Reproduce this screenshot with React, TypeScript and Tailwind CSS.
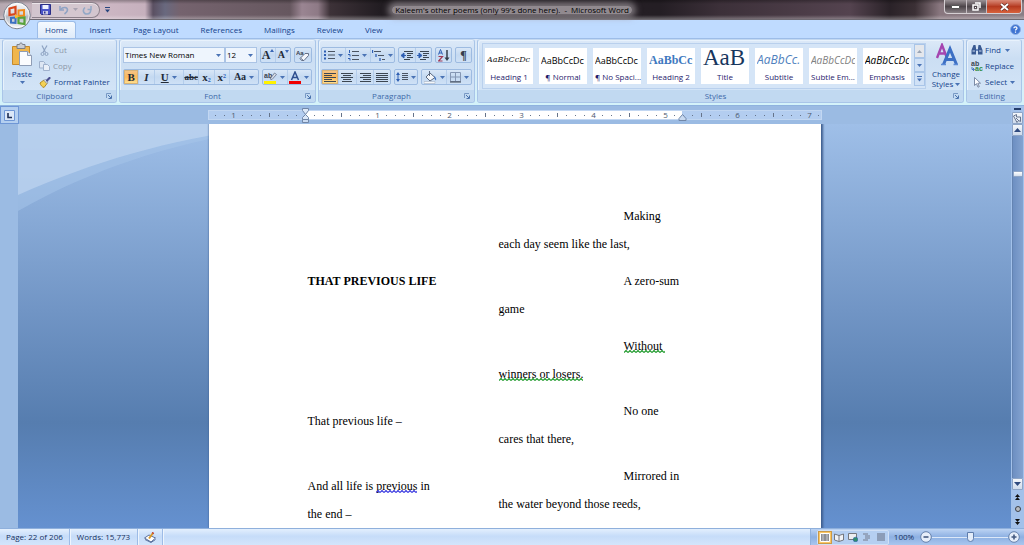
import type { ReactNode } from "react";
import clsx from "clsx";

const TABS = ["Insert", "Page Layout", "References", "Mailings", "Review", "View"];

const STYLES = [
	{ name: "Heading 1", sample: "AaBbCcDc", look: "font-['DejaVu_Serif'] text-[8px] italic text-[#222]" },
	{ name: "¶ Normal", sample: "AaBbCcDc", look: "text-[9px] text-black" },
	{ name: "¶ No Spaci...", sample: "AaBbCcDc", look: "text-[9px] text-black" },
	{ name: "Heading 2", sample: "AaBbCc", look: "font-['Liberation_Serif'] text-[12px] font-bold text-[#4079c0]" },
	{ name: "Title", sample: "AaB", look: "font-['Liberation_Serif'] pb-[6px] text-[23px] text-[#17365d]" },
	{ name: "Subtitle", sample: "AaBbCc.", look: "text-[12px] italic text-[#4f81bd]" },
	{ name: "Subtle Em...", sample: "AaBbCcDc", look: "text-[10px] italic text-[#808080]" },
	{ name: "Emphasis", sample: "AaBbCcDc", look: "text-[10px] italic text-black" },
];

const VERSES = [
	["Making", "each day seem like the last,"],
	["A zero-sum", "game"],
	["Without ", "winners or losers."],
	["No one", "cares that there,"],
	["Mirrored in", "the water beyond those reeds,"],
];

const TICKS = Array.from({ length: 68 }, (_, i) => i - 10);

interface IconProps {
	w?: number;
	h?: number;
	children: ReactNode;
}

function Icon({ w = 12, h = 12, children }: IconProps) {
	return (
		<svg className="shrink-0" width={w} height={h} viewBox={`0 0 ${w} ${h}`} fill="none" aria-hidden="true">
			{children}
		</svg>
	);
}

function Caret({ color = "#4a73b5" }: { color?: string }) {
	return (
		<Icon w={5} h={3}>
			<path d="M0 0h5L2.500 3z" fill={color} />
		</Icon>
	);
}

interface GroupProps {
	title: string;
	className?: string;
	launcher?: boolean;
	children: ReactNode;
}

function Group({ title, className, launcher = true, children }: GroupProps) {
	return (
		<section
			className={clsx(
				"flex flex-col overflow-hidden rounded-[3px] border border-[#a9c5e8] border-t-[#c3d8f0] bg-linear-to-b from-[#dce9f8] via-[#cbdef3] via-30% to-[#d5e6f8] shadow-[inset_1px_1px_0_#e8f2fc]",
				className,
			)}
		>
			<div className="min-h-0 flex-1">{children}</div>
			<div className="flex h-3 items-center bg-[#c1d9f1] pr-1 text-[#3e6aaa]">
				<h2 className="flex-1 text-center">{title}</h2>
				{launcher && (
					<button aria-label={`${title} options`}>
						<Icon w={6} h={6}>
							<path d="M.5 5V.5H5" stroke="#7899c4" />
							<path d="M2 2l3 3M5.500 2.500v3h-3" stroke="#4a73ad" />
						</Icon>
					</button>
				)}
			</div>
		</section>
	);
}

function Cluster({ className, children }: { className?: string; children: ReactNode }) {
	return (
		<div
			className={clsx(
				"flex h-4 divide-x divide-[#b4cdeb] rounded-[2px] border border-[#9dbbe1] bg-linear-to-b from-[#d9e7f7] via-[#c4d9f1] via-50% to-[#cfe1f6]",
				className,
			)}
		>
			{children}
		</div>
	);
}

interface ToolProps {
	label: string;
	active?: boolean;
	menu?: boolean;
	className?: string;
	children: ReactNode;
}

function Tool({ label, active, menu, className, children }: ToolProps) {
	return (
		<button
			aria-label={label}
			aria-pressed={active}
			className={clsx(
				"flex flex-1 items-center justify-center gap-[3px] overflow-hidden",
				active && "bg-linear-to-b from-[#f3c58c] via-[#fcb95a] to-[#ffe596] shadow-[inset_0_0_0_1px_#d8b277]",
				className,
			)}
		>
			{children}
			{menu && <Caret />}
		</button>
	);
}

function Lines({ widths }: { widths: number[][] }) {
	return (
		<Icon w={12} h={11}>
			{widths.map(([x, w], i) => (
				<path key={i} d={`M${x} ${i * 2 + 1.5}h${w}`} stroke="#3c4652" />
			))}
		</Icon>
	);
}

function OfficeButton() {
	return (
		<button aria-label="Office Button" className="absolute top-[1px] left-[3px] z-20">
			<Icon w={28} h={29}>
				<defs>
					<linearGradient id="orb" x1="0" y1="0" x2="0" y2="1">
						<stop offset="0" stopColor="#fafafa" />
						<stop offset="0.450" stopColor="#d3d6dc" />
						<stop offset="0.550" stopColor="#b5bac4" />
						<stop offset="1" stopColor="#fbfcfe" />
					</linearGradient>
				</defs>
				<circle cx="14" cy="14.500" r="13.300" fill="url(#orb)" stroke="#7d8390" />
				<circle cx="14" cy="14.500" r="12" stroke="#fff" strokeOpacity=".7" />
				<path d="M6.500 7.500l6-1.500v7l-6 1z" stroke="#d8461b" strokeWidth="2.200" />
				<path d="M15.500 9.500l5.500-.5v5.500l-5.500.5z" stroke="#f08a1c" strokeWidth="2" />
				<path d="M8 17l4.500-.5v5.500l-4.500-.5z" stroke="#3a6fc0" strokeWidth="2" />
				<path d="M15.500 17l6-.5v6.500l-6-1z" stroke="#58a23a" strokeWidth="2.200" />
				<path d="M12 13l4 2.500-4 2z" fill="#f7bd2c" />
			</Icon>
		</button>
	);
}

function TitleBar() {
	return (
		<header className="relative flex h-5 shrink-0 items-center border-b border-[#6e6a72]">
			<div className="absolute inset-0 bg-[linear-gradient(90deg,#b5a8b0_0,#d3bfca_60px,#c6b0bd_145px,#5b5062_153px,#69697f_165px,#75636e_180px,#66575f_290px,#9a8592_302px,#8e7a86_318px,#3d3238_330px,#221d22_380px,#241e24_660px,#3c3039_720px,#54434f_850px,#2a2228_890px,#3b3035_915px,#89777f_940px,#8b7f86_1024px)]" />
			<div className="absolute inset-x-0 top-0 h-1 bg-linear-to-b from-black/30 to-transparent" />
			<div className="absolute inset-x-0 bottom-0 h-1 bg-linear-to-t from-white/30 to-transparent" />
			<OfficeButton />
			<div className="relative ml-8 flex h-4 w-17 items-center gap-1 rounded-r-full border border-l-0 border-[#8b808a] bg-[#d5c9d1]/80 pl-2 shadow-[inset_0_1px_0_#ffffff90]">
				<button aria-label="Save">
					<Icon w={11} h={11}>
						<path d="M.5.500h10v10h-9l-1-1z" fill="#4a55c8" stroke="#2b2f86" />
						<path d="M2.500 1h6v4h-6z" fill="#eef2ff" />
						<path d="M3 7h5v3.500H3z" fill="#c9cde8" />
						<path d="M4 7.500h1.500v2H4z" fill="#2b2f86" />
					</Icon>
				</button>
				<button aria-label="Undo" className="ml-1 flex items-center gap-1">
					<Icon w={10} h={10}>
						<path d="M1 1v4h4" stroke="#8fa3c4" strokeWidth="1.500" />
						<path d="M1.500 4.500C4 1.500 8.500 2 8.500 5c0 2-1.500 3-3 4" stroke="#8fa3c4" strokeWidth="1.600" />
					</Icon>
					<Caret color="#a9a3b0" />
				</button>
				<button aria-label="Redo">
					<Icon w={10} h={10}>
						<path d="M9 1v3.500H5.500" stroke="#93a9c6" strokeWidth="1.500" />
						<path d="M3 2.500C0 5 1.500 9 5 9c3 0 4-2.500 3.500-4.500" stroke="#93a9c6" strokeWidth="1.600" />
					</Icon>
				</button>
			</div>
			<button aria-label="Customize Quick Access Toolbar" className="relative ml-[5px]">
				<Icon w={5} h={6}>
					<path d="M0 .5h5" stroke="#28467e" />
					<path d="M0 2.500h5L2.500 5.500z" fill="#28467e" />
				</Icon>
			</button>
			<h1 className="absolute inset-x-0 mx-auto h-2 w-[240px] rounded-full bg-[#aca5aa]/80 text-center leading-2 whitespace-pre text-black shadow-[0_0_6px_4px_#a19a9fb0]">
				Kaleem's other poems (only 99's done here).  -  Microsoft Word
			</h1>
			<div className="relative mr-[2px] ml-auto flex h-[14px] w-[78px] self-start overflow-hidden rounded-b-[4px] border border-t-0 border-[#d5cfd3] bg-linear-to-b from-[#9b9397] via-[#4d454a] to-[#8a8186]">
				<button aria-label="Minimize" className="flex w-[22px] items-center justify-center border-r border-[#c5bdc2]">
					<Icon w={9} h={4}>
						<path d="M.5.500h8v3h-8z" fill="#fff" stroke="#555" />
					</Icon>
				</button>
				<button aria-label="Restore" className="flex w-[20px] items-center justify-center border-r border-[#c5bdc2]">
					<Icon w={9} h={9}>
						<path d="M3 1h5v5M1 3h5v5H1z" stroke="#fff" strokeWidth="1.500" />
						<path d="M3 5h1v1H3z" fill="#fff" />
					</Icon>
				</button>
				<button
					aria-label="Close"
					className="flex flex-1 items-center justify-center bg-linear-to-b from-[#d98a78] via-[#b53a20] via-50% to-[#d8623c]"
				>
					<Icon w={9} h={8}>
						<path d="M1 1l7 6M8 1L1 7" stroke="#5b2a22" strokeWidth="3" />
						<path d="M1 1l7 6M8 1L1 7" stroke="#fff" strokeWidth="1.800" />
					</Icon>
				</button>
			</div>
		</header>
	);
}

function TabRow() {
	return (
		<nav className="flex h-[18px] shrink-0 items-stretch bg-[#bfdbff] pr-[3px] pl-[37px] text-[#15428b]" aria-label="Ribbon tabs">
			<button className="mt-[1px] rounded-t-[3px] border border-b-0 border-[#9dbde8] bg-linear-to-b from-[#f5faff] to-[#dfebf9] px-[7px]">
				Home
			</button>
			<div className="ml-[5px] flex">
				{TABS.map((tab) => (
					<button key={tab} className="pt-[1px] pr-[13px] pl-[9px]">
						{tab}
					</button>
				))}
			</div>
			<button aria-label="Help" className="ml-auto">
				<Icon w={11} h={11}>
					<circle cx="5.500" cy="5.500" r="5" fill="#3f74d2" stroke="#8fb0e4" />
					<path d="M3.800 4.200C4 2.500 7 2.500 7 4.300c0 1-1.500 1-1.500 2.200M5.500 7.500v1.200" stroke="#fff" strokeWidth="1.200" />
				</Icon>
			</button>
		</nav>
	);
}

function ClipboardGroup() {
	return (
		<Group title="Clipboard" className="w-[115px]">
			<div className="flex gap-1 pt-[2px] pl-[6px]">
				<button className="flex w-[26px] flex-col items-center">
					<Icon w={22} h={24}>
						<path d="M1.500 4.500h17v18h-17z" fill="#f0b64c" stroke="#c58a2d" />
						<path d="M6 2.500h2.500c0-2 3-2 3 0H14v4H6z" fill="#c9ccd2" stroke="#7b7f88" />
						<path d="M8.500 9.500h8l4 4v10h-12z" fill="#fbfcfe" stroke="#8f9db5" />
						<path d="M16.500 9.500v4h4" fill="#dfe5ef" stroke="#8f9db5" />
					</Icon>
					<span className="mt-[2px] leading-[11px]">Paste</span>
					<span className="pt-[2px]">
						<Caret />
					</span>
				</button>
				<div className="flex flex-col items-start text-[#8d98a8]">
					<button className="flex h-4 items-center gap-1">
						<Icon w={11} h={11}>
							<path d="M3 .5l3.500 7M8 .5L4 7.500" stroke="#8ea3c2" strokeWidth="1.200" />
							<circle cx="3.500" cy="9" r="1.500" stroke="#8ea3c2" />
							<circle cx="7.500" cy="9" r="1.500" stroke="#8ea3c2" />
						</Icon>
						Cut
					</button>
					<button className="flex h-4 items-center gap-[3px]">
						<Icon w={11} h={10}>
							<path d="M.5.500h4l1.500 1.500v5H.5z" fill="#dde6f3" stroke="#9fb1cc" />
							<path d="M4.500 3.500h4l2 2v4h-6z" fill="#e9eff8" stroke="#9fb1cc" />
						</Icon>
						Copy
					</button>
					<button className="flex h-4 items-center gap-[3px] text-[#15428b]">
						<Icon w={12} h={11}>
							<path d="M1 6l4-3 3 3.500-3 4C3 10 1.500 8 1 6z" fill="#f3d155" stroke="#b28b27" />
							<path d="M5 3.500l1.500-1.500 2.500 3-1 1.500z" fill="#e7edf6" stroke="#76839b" strokeWidth=".7" />
							<path d="M8 3.500L10.500 1" stroke="#4b4f8f" strokeWidth="2.200" strokeLinecap="round" />
						</Icon>
						Format Painter
					</button>
				</div>
			</div>
		</Group>
	);
}

function FontGroup() {
	const glyph = "font-['Liberation_Serif'] text-[11px] leading-none text-[#222b38]";
	const box = "h-4 w-full appearance-none border border-[#abc4e5] bg-[#eef5fd] pl-[1px] text-black outline-none";
	return (
		<Group title="Font" className="w-[197px]">
			<div className="flex flex-col gap-[6px] px-[3px] pt-[7px]">
				<div className="flex gap-[3px]">
					<div className="flex w-[134px]">
						<label className="relative flex w-[102px] items-center">
							<span className="sr-only">Font</span>
							<select className={box} defaultValue="Times New Roman">
								<option>Times New Roman</option>
							</select>
							<span className="pointer-events-none absolute right-1">
								<Caret />
							</span>
						</label>
						<label className="relative flex w-8 items-center">
							<span className="sr-only">Font size</span>
							<select className={box} defaultValue="12">
								<option>12</option>
							</select>
							<span className="pointer-events-none absolute right-1">
								<Caret />
							</span>
						</label>
					</div>
					<Cluster className="w-8">
						<Tool label="Grow font">
							<span className="flex items-start font-['Liberation_Serif'] text-[12px] leading-none font-bold text-[#222b38]">
								A
								<Icon w={4} h={3}>
									<path d="M0 3h4L2 0z" fill="#3a67b5" />
								</Icon>
							</span>
						</Tool>
						<Tool label="Shrink font">
							<span className="flex items-start font-['Liberation_Serif'] text-[10px] leading-none font-bold text-[#222b38]">
								A
								<Icon w={4} h={3}>
									<path d="M0 0h4L2 3z" fill="#3a67b5" />
								</Icon>
							</span>
						</Tool>
					</Cluster>
					<Cluster className="w-[18px]">
						<Tool label="Clear formatting">
							<Icon w={14} h={13}>
								<text x="0" y="6" fontSize="6" fontWeight="bold" fill="#39424f" fontFamily="Liberation Sans">
									Aa
								</text>
								<path d="M4 9.500l5-5h3.500v2l-4.500 5H5.500z" fill="#f3f6fb" stroke="#66728a" />
								<path d="M4.500 9l3 2.500" stroke="#66728a" />
							</Icon>
						</Tool>
					</Cluster>
				</div>
				<div className="flex gap-[3px]">
					<Cluster className="w-[137px]">
						<Tool label="Bold" active>
							<span className={clsx(glyph, "font-bold")}>B</span>
						</Tool>
						<Tool label="Italic">
							<span className={clsx(glyph, "font-bold italic")}>I</span>
						</Tool>
						<Tool label="Underline" menu className="grow-2">
							<span className={clsx(glyph, "font-bold underline")}>U</span>
						</Tool>
						<Tool label="Strikethrough">
							<span className="font-['Liberation_Serif'] text-[9px] leading-none font-bold text-[#222b38] line-through">
								abc
							</span>
						</Tool>
						<Tool label="Subscript">
							<span className={clsx(glyph, "font-bold")}>
								x<sub className="text-[6px] text-[#2a5cb8]">2</sub>
							</span>
						</Tool>
						<Tool label="Superscript">
							<span className={clsx(glyph, "font-bold")}>
								x<sup className="text-[6px] text-[#2a5cb8]">2</sup>
							</span>
						</Tool>
						<Tool label="Change case" menu className="grow-2">
							<span className="font-['Liberation_Serif'] text-[10px] leading-none font-bold text-[#222b38]">Aa</span>
						</Tool>
					</Cluster>
					<Cluster className="w-[50px]">
						<Tool label="Text highlight color" menu>
							<Icon w={13} h={13}>
								<text x="0" y="7" fontSize="7" fontWeight="bold" fill="#39424f" fontFamily="Liberation Sans">
									ab
								</text>
								<path d="M6 8l4.500-6L12.500 3.500 8 8.500z" fill="#d7dde8" stroke="#66728a" strokeWidth=".8" />
								<path d="M0 10h12v3H0z" fill="#fff200" />
							</Icon>
						</Tool>
						<Tool label="Font color" menu>
							<Icon w={12} h={13}>
								<path d="M2.500 9L6 1l3.500 8M3.500 6.500h5" stroke="#2f4f8f" strokeWidth="1.500" />
								<path d="M0 10h12v3H0z" fill="#f00000" />
							</Icon>
						</Tool>
					</Cluster>
				</div>
			</div>
		</Group>
	);
}

function ParagraphGroup() {
	return (
		<Group title="Paragraph" className="w-[157px]">
			<div className="flex flex-col gap-[6px] px-[2px] pt-[7px]">
				<div className="flex gap-[3px]">
					<Cluster className="w-[74px]">
						<Tool label="Bullets" menu>
							<Icon w={11} h={10}>
								<path d="M0 1.500h2M0 5h2M0 8.500h2" stroke="#2f5fb3" strokeWidth="2" />
								<path d="M4 1.500h7M4 5h7M4 8.500h7" stroke="#4b5563" />
							</Icon>
						</Tool>
						<Tool label="Numbering" menu>
							<Icon w={11} h={11}>
								<path d="M1.500 0v3M0 4.500h2v2M0 8.500h2v2" stroke="#2f5fb3" />
								<path d="M4 1.500h7M4 5.500h7M4 9.500h7" stroke="#4b5563" />
							</Icon>
						</Tool>
						<Tool label="Multilevel list" menu>
							<Icon w={13} h={11}>
								<path d="M.5 0v3M4 4v3M8 8v3" stroke="#2f5fb3" strokeWidth="1.300" />
								<path d="M2 1.500h7M6 5.500h6M10 9.500h3" stroke="#4b5563" />
							</Icon>
						</Tool>
					</Cluster>
					<Cluster className="w-[34px]">
						<Tool label="Decrease indent">
							<Icon w={12} h={11}>
								<path d="M3 1.500h9M6 3.500h6M6 5.500h4M6 7.500h6M3 9.500h6" stroke="#3c4652" />
								<path d="M0 5.500L3 3v5zM3 5.500h2" fill="#2f5fb3" stroke="#2f5fb3" />
							</Icon>
						</Tool>
						<Tool label="Increase indent">
							<Icon w={12} h={11}>
								<path d="M3 1.500h9M6 3.500h6M6 5.500h4M6 7.500h6M3 9.500h6" stroke="#3c4652" />
								<path d="M5 5.500L2 3v5zM0 5.500h2" fill="#2f5fb3" stroke="#2f5fb3" />
							</Icon>
						</Tool>
					</Cluster>
					<Cluster className="w-[17px]">
						<Tool label="Sort">
							<Icon w={12} h={13}>
								<path d="M.5 5.500L2.500.5l2 5M1 4h3" stroke="#2f5fb3" />
								<path d="M.5 7.500h4l-4 4.500h4" stroke="#a03a56" strokeWidth="1.200" />
								<path d="M9 1v9" stroke="#333d4a" strokeWidth="1.500" />
								<path d="M6.500 8.500h5L9 12z" fill="#333d4a" />
							</Icon>
						</Tool>
					</Cluster>
					<Cluster className="w-[17px]">
						<Tool label="Show formatting marks">
							<span className="font-['Liberation_Serif'] text-[12px] leading-none font-bold text-[#333d4a]">¶</span>
						</Tool>
					</Cluster>
				</div>
				<div className="flex gap-[3px]">
					<Cluster className="w-[70px]">
						<Tool label="Align left" active>
							<Lines widths={[[0, 12], [0, 8], [0, 12], [0, 8], [0, 12]]} />
						</Tool>
						<Tool label="Center">
							<Lines widths={[[0, 12], [2, 8], [0, 12], [2, 8], [1, 10]]} />
						</Tool>
						<Tool label="Align right">
							<Lines widths={[[1, 11], [4, 8], [1, 11], [4, 8], [1, 11]]} />
						</Tool>
						<Tool label="Justify">
							<Lines widths={[[0, 12], [0, 12], [0, 12], [0, 12], [0, 12]]} />
						</Tool>
					</Cluster>
					<Cluster className="w-6">
						<Tool label="Line spacing" menu>
							<Icon w={12} h={12}>
								<path d="M0 4L2 1l2 3zM0 8l2 3 2-3z" fill="#2f5fb3" />
								<path d="M2 3v6" stroke="#2f5fb3" />
								<path d="M6 2.500h6M6 4.500h6M6 6.500h6M6 8.500h6" stroke="#4b5563" />
							</Icon>
						</Tool>
					</Cluster>
					<Cluster className="w-[51px]">
						<Tool label="Shading" menu>
							<Icon w={13} h={13}>
								<path d="M2 6l4-4 5 4.500-5 3.500z" fill="#f4f7fb" stroke="#5d6a80" />
								<path d="M5.500 0v5" stroke="#5d6a80" />
								<path d="M10 5c2 1 2.500 3 2 4.500-1-.5-1.500-2-2-4.500z" fill="#3f74c4" />
								<path d="M0 10.500h11v2H0z" fill="#f5f7fa" stroke="#a5b1c4" strokeWidth=".6" />
							</Icon>
						</Tool>
						<Tool label="Borders" menu>
							<Icon w={11} h={11}>
								<path d="M.5.500h10v9H.5zM5.500.5v9M.5 5h10" stroke="#8496b3" />
								<path d="M0 10h11" stroke="#3c4652" />
							</Icon>
						</Tool>
					</Cluster>
				</div>
			</div>
		</Group>
	);
}

function StylesGroup() {
	const step = "flex h-[14px] w-[11px] items-center justify-center border border-[#a9c5e8]";
	return (
		<Group title="Styles" className="min-w-0 flex-1">
			<div className="flex gap-[3px] pt-[3px] pl-1">
				<div className="flex h-[46px] min-w-0 flex-1 items-start justify-between border border-[#b9d0ed] bg-[#d5e5f7] pl-[2px]">
					<div className="flex gap-[6px] overflow-hidden pt-[4px]">
						{STYLES.map((style) => (
							<button key={style.name} className="flex h-9 w-12 shrink-0 flex-col overflow-hidden bg-white px-[2px]">
								<span className={clsx("flex h-[22px] w-full items-center overflow-hidden pt-[2px] leading-none whitespace-nowrap", style.look)}>
									{style.sample}
								</span>
								<span className="w-full text-center leading-[14px] whitespace-nowrap text-[#1f1a6b]">{style.name}</span>
							</button>
						))}
					</div>
					<div className="flex flex-col">
						<button aria-label="Previous styles" className={clsx(step, "bg-[#e4e7ec]")}>
							<Icon w={5} h={3}>
								<path d="M0 3h5L2.500 0z" fill="#9aa5b5" />
							</Icon>
						</button>
						<button aria-label="Next styles" className={clsx(step, "bg-[#d0e1f6]")}>
							<Caret />
						</button>
						<button aria-label="More styles" className={clsx(step, "bg-[#d0e1f6]")}>
							<Icon w={5} h={6}>
								<path d="M0 .5h5" stroke="#4a73b5" />
								<path d="M0 2.500h5L2.500 5.500z" fill="#4a73b5" />
							</Icon>
						</button>
					</div>
				</div>
				<button className="flex w-[34px] flex-col items-center leading-[10px]">
					<Icon w={23} h={24}>
						<path d="M2 15L7 2l5 13M4 10.500h6" stroke="#a545b0" strokeWidth="2.400" />
						<path d="M8.500 21.500L15 6l6.500 15.500M11 16.500h8" stroke="#3c6fc4" strokeWidth="3" />
						<path d="M6 21.500h5M18.500 21.500H23" stroke="#5b8ad6" strokeWidth="1.500" />
					</Icon>
					<span className="mt-[2px]">Change</span>
					<span className="flex items-center gap-[2px]">
						Styles <Caret />
					</span>
				</button>
			</div>
		</Group>
	);
}

function EditingGroup() {
	const row = "flex h-4 items-center gap-[2px]";
	return (
		<Group title="Editing" launcher={false} className="w-14">
			<div className="flex flex-col pt-[2px] pl-1">
				<button className={row}>
					<Icon w={12} h={10}>
						<path d="M2.500 0h2L5 3v6.500H.5V5zM7.500 0h2l2 5v4.500H7V3z" fill="#3a5a92" />
						<path d="M5 4h2v2H5z" fill="#6e8cc0" />
						<path d="M1.500 6h2.500M8 6h2.500" stroke="#c9d8f0" />
					</Icon>
					Find
					<span className="pl-[2px]">
						<Caret />
					</span>
				</button>
				<button className={row}>
					<Icon w={12} h={12}>
						<text x="0" y="6" fontSize="7" fontWeight="bold" fill="#3c4652" fontFamily="Liberation Sans">
							ab
						</text>
						<text x="4" y="11" fontSize="7" fontWeight="bold" fill="#2f8a3c" fontFamily="Liberation Sans">
							ac
						</text>
						<path d="M1 7v2.500h2M2 8l1.500 1.500L2 11" stroke="#2f5fb3" strokeWidth=".8" />
					</Icon>
					Replace
				</button>
				<button className={row}>
					<Icon w={12} h={11}>
						<path d="M3.500.5v8l2-1.800 1.500 3.500 1.300-.6L6.800 6.200h2.700z" fill="#fdfdff" stroke="#6f7f9c" strokeWidth=".9" />
					</Icon>
					Select
					<span className="pl-[1px]">
						<Caret />
					</span>
				</button>
			</div>
		</Group>
	);
}

function Ruler() {
	return (
		<div className="flex h-[18px] items-center bg-[#9bbbe3]">
			<button
				aria-label="Tab selector"
				className="flex h-[18px] w-[19px] items-center justify-center border border-[#6f97d6] bg-[#b4cff0]"
			>
				<Icon w={11} h={11}>
					<path d="M.5.500h10v10H.5z" fill="#dbe7f8" stroke="#6f97d6" />
					<path d="M4 3v4.500h4" stroke="#1e2f55" strokeWidth="1.600" />
				</Icon>
			</button>
			<div className="flex flex-1 justify-center">
				<div className="relative flex h-[10px] w-[614px] items-center border border-[#c2d7f2] bg-[linear-gradient(90deg,#b3cdf0_97px,#fff_97px,#fff_473px,#b3cdf0_473px)] pl-[2px] text-[#4d5a6e]">
					{TICKS.map((k) => (
						<span key={k} className="flex w-[9px] shrink-0 justify-center leading-none">
							{k === 0 ? null : k % 8 === 0 ? (
								Math.abs(k / 8)
							) : k % 4 === 0 ? (
								<i className="h-1 w-px bg-[#66748a]" />
							) : (
								<i className="size-px bg-[#66748a]" />
							)}
						</span>
					))}
					<span className="absolute -top-[3px] left-[92px]">
						<Icon w={9} h={16}>
							<path d="M1.500.500h6v2l-3 4-3-4zM4.500 6.500l3 3v2h-6v-2z" fill="#dce8f8" stroke="#7187a8" />
							<path d="M1.500 11.500h6v3h-6z" fill="#c9daf1" stroke="#7187a8" />
						</Icon>
					</span>
					<span className="absolute top-[3px] left-[469px]">
						<Icon w={9} h={7}>
							<path d="M4.500.500l3.500 4v2H1v-2z" fill="#c9daf1" stroke="#7187a8" />
						</Icon>
					</span>
				</div>
			</div>
		</div>
	);
}

function Squiggle({ color, children }: { color: string; children: ReactNode }) {
	const id = `wave-${color.slice(1)}`;
	return (
		<span className="relative inline-block whitespace-pre">
			{children}
			<svg className="absolute bottom-[7px] left-0 h-[3px] w-full" aria-hidden="true">
				<pattern id={id} width="4" height="3" patternUnits="userSpaceOnUse">
					<path d="M0 2.500L2 .5l2 2" fill="none" stroke={color} strokeWidth="1.200" />
				</pattern>
				<rect width="100%" height="3" fill={`url(#${id})`} />
			</svg>
		</span>
	);
}

function Page() {
	return (
		<article className="mx-auto grid w-[612px] grid-cols-[191px_185px] bg-white pt-[78px] pl-[99px] font-['Liberation_Serif',serif] text-[12px] leading-7 text-black shadow-[1px_0_2px_1px_#3f5f8f]">
			<div className="pt-[65px]">
				<h2 className="mb-[112px] font-bold">THAT PREVIOUS LIFE</h2>
				<p className="mb-[37px]">That previous life –</p>
				<p>
					And all life is <Squiggle color="#3a3ae0">previous</Squiggle> in
					<br />
					the end –
				</p>
			</div>
			<div>
				{VERSES.map(([first, second], i) => (
					<p key={first} className="mb-[9px] indent-[125px]">
						{i === 2 ? (
							<>
								<span className="flex pl-[125px] indent-0">
									<Squiggle color="#1f9a2c">{first}</Squiggle>
								</span>
								<span className="flex indent-0">
									<Squiggle color="#1f9a2c">{second}</Squiggle>
								</span>
							</>
						) : (
							<>
								{first}
								<br />
								{second}
							</>
						)}
					</p>
				))}
			</div>
		</article>
	);
}

function ScrollBar() {
	const arrow = "flex h-3 w-[11px] items-center justify-center rounded-[1px] border border-[#8fa5c6] bg-linear-to-b from-[#f4f7fb] to-[#cfdbec]";
	return (
		<aside className="flex w-[13px] shrink-0 flex-col items-center bg-[#a3c1ea] pt-[2px]" aria-label="Vertical scroll bar">
			<div className="h-[2px] w-[7px] bg-[#243d6b]" />
			<button aria-label="View ruler" className={clsx(arrow, "mt-[2px]")}>
				<Icon w={9} h={9}>
					<path d="M.5 2l3-1.500V3h4v4.500l-2-1-1.500 2z" fill="#e8eef7" stroke="#66748f" />
					<path d="M3 4l3 3" stroke="#66748f" />
				</Icon>
			</button>
			<button aria-label="Scroll up" className={arrow}>
				<Icon w={7} h={4}>
					<path d="M0 4h7L3.500 0z" fill="#2f4a7e" />
				</Icon>
			</button>
			<div className="w-[11px] flex-1 border-l border-[#6484b2] bg-linear-to-r from-[#6d8fc2] to-[#84a3d0] pt-[35px]">
				<div className="h-[6px] w-[10px] rounded-[1px] border border-[#8fa5c6] bg-linear-to-b from-white to-[#d4deed]" />
			</div>
			<button aria-label="Scroll down" className={arrow}>
				<Icon w={7} h={4}>
					<path d="M0 0h7L3.500 4z" fill="#2f4a7e" />
				</Icon>
			</button>
			<button aria-label="Previous page" className="flex h-[13px] items-center">
				<Icon w={5} h={6}>
					<path d="M0 3h5L2.500 0zM0 6h5L2.500 3z" fill="#111" />
				</Icon>
			</button>
			<button aria-label="Select browse object" className="flex h-3 items-center">
				<Icon w={6} h={6}>
					<circle cx="3" cy="3" r="2.500" fill="#b9bdc4" stroke="#3b3f47" />
				</Icon>
			</button>
			<button aria-label="Next page" className="flex h-[13px] items-center">
				<Icon w={5} h={6}>
					<path d="M0 0h5L2.500 3zM0 3h5L2.500 6z" fill="#111" />
				</Icon>
			</button>
		</aside>
	);
}

function StatusBar() {
	const cell = "flex h-full items-center border-r border-[#9dbbe6] shadow-[1px_0_0_#eef5fd]";
	const view = "flex h-[13px] w-[14px] items-center justify-center";
	return (
		<footer className="flex h-[17px] shrink-0 items-center border-t border-[#8fb0dc] bg-linear-to-b from-[#e3effd] via-[#c6dcf9] via-45% to-[#d3e5fb] text-[#15305f]">
			<span className={clsx(cell, "px-[6px]")}>Page: 22 of 206</span>
			<span className={clsx(cell, "px-[7px]")}>Words: 15,773</span>
			<button aria-label="Proofing" className={clsx(cell, "px-[6px]")}>
				<Icon w={12} h={11}>
					<path d="M.5 6L5 3l6.500 3L7 10z" fill="#fff" stroke="#5a6f9b" />
					<path d="M1 7.500L7 10.500l4.500-3" stroke="#5a6f9b" />
					<path d="M5 6.500L9 1" stroke="#d99a2b" strokeWidth="2" />
					<path d="M8.500 1.500L9.500.5" stroke="#c23b32" strokeWidth="2" />
				</Icon>
			</button>
			<div className="ml-auto flex h-full items-center border-l border-[#8fb0dc] bg-linear-to-b from-[#bcd3f3] via-[#8db0e2] via-50% to-[#a9c6ee] pr-1 pl-[6px]">
				<div className="flex rounded-[2px] border border-[#d0e0f6] bg-[#b5cff1]">
					<button aria-label="Print layout" className={clsx(view, "bg-[#fcc763] shadow-[inset_0_0_0_1px_#c99a4a]")}>
						<Icon w={10} h={9}>
							<path d="M.5.500h9v8h-9z" fill="#8d8f94" stroke="#fff" />
							<path d="M3 1v7M7 1v7" stroke="#c9cbd0" />
						</Icon>
					</button>
					<button aria-label="Full screen reading" className={view}>
						<Icon w={10} h={9}>
							<path d="M.5 1L5 2.500 9.500 1v6L5 8.500.5 7z" fill="#f0f2f5" stroke="#74777e" />
							<path d="M5 2v6" stroke="#74777e" />
						</Icon>
					</button>
					<button aria-label="Web layout" className={view}>
						<Icon w={10} h={9}>
							<path d="M.5.500h8v6h-8z" fill="#eceef1" stroke="#74777e" />
							<circle cx="7.500" cy="6.500" r="2.300" fill="#2f8f6b" stroke="#2c5fa8" strokeWidth=".6" />
						</Icon>
					</button>
					<button aria-label="Outline" className={view}>
						<Icon w={8} h={8}>
							<path d="M0 1h5M2 3h5M2 5h5M0 7h5" stroke="#8b98ae" strokeWidth="1.400" />
						</Icon>
					</button>
					<button aria-label="Draft" className={view}>
						<Icon w={8} h={8}>
							<path d="M0 1h8M0 3h8M0 5h8M0 7h8" stroke="#7f8da5" strokeWidth="1.500" />
						</Icon>
					</button>
				</div>
				<button className="ml-[3px] w-[24px] text-center">100%</button>
				<button aria-label="Zoom out" className="ml-1">
					<Icon w={12} h={12}>
						<circle cx="6" cy="6" r="5.300" fill="#e6eefa" stroke="#6681ab" />
						<path d="M3.500 6h5" stroke="#44597f" strokeWidth="1.600" />
					</Icon>
				</button>
				<input
					type="range"
					aria-label="Zoom"
					min={0}
					max={100}
					defaultValue={50}
					className="h-3 w-[76px] appearance-none bg-[linear-gradient(#dce8f8,#dce8f8)] bg-[length:100%_1px] bg-center bg-no-repeat [&::-webkit-slider-thumb]:h-[10px] [&::-webkit-slider-thumb]:w-[7px] [&::-webkit-slider-thumb]:appearance-none [&::-webkit-slider-thumb]:rounded-b-[4px] [&::-webkit-slider-thumb]:border [&::-webkit-slider-thumb]:border-[#5f7dac] [&::-webkit-slider-thumb]:bg-[#e3ecf9]"
				/>
				<button aria-label="Zoom in">
					<Icon w={12} h={12}>
						<circle cx="6" cy="6" r="5.300" fill="#e6eefa" stroke="#6681ab" />
						<path d="M3.500 6h5M6 3.500v5" stroke="#44597f" strokeWidth="1.600" />
					</Icon>
				</button>
			</div>
		</footer>
	);
}

export default function App() {
	return (
		<div className="flex h-screen flex-col overflow-hidden bg-[#bfdbff] font-['Open_Sans',sans-serif] text-[8px] leading-3 text-[#15428b]">
			<TitleBar />
			<TabRow />
			<div className="flex h-[68px] shrink-0 items-stretch gap-[2px] border-t border-[#9dbde8] bg-linear-to-b from-[#dbe8f8] to-[#d4f3fa] px-[2px] pb-[3px] shadow-[inset_0_-1px_0_#8fb3df]">
				<ClipboardGroup />
				<FontGroup />
				<ParagraphGroup />
				<StylesGroup />
				<EditingGroup />
			</div>
			<div className="flex min-h-0 flex-1">
				<main className="flex min-w-0 flex-1 flex-col">
					<Ruler />
					<div className="flex min-h-0 flex-1">
						<div className="w-[18px] shrink-0 bg-[#9bbbe3]" />
						<div className="relative min-w-0 flex-1 overflow-hidden bg-[linear-gradient(#9fbfe8_0%,#7195c5_46%,#567daf_74%,#6591d0_100%)]">
							<svg className="absolute top-0 left-0" width="300" height="90" aria-hidden="true">
								<path d="M0 0h300C190 8 90 36 0 87z" fill="#a6c4e9" fillOpacity=".55" />
								<path d="M0 0h300C190 4 90 31 0 71z" fill="#c4d9f2" fillOpacity=".6" />
							</svg>
							<div className="relative h-full overflow-hidden">
								<Page />
							</div>
						</div>
					</div>
				</main>
				<ScrollBar />
			</div>
			<StatusBar />
		</div>
	);
}
